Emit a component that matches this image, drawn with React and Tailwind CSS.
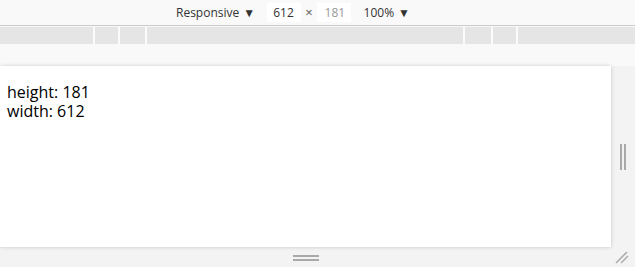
export default function App() {
  const font = { fontFamily: '"Open Sans", "Noto Sans", sans-serif' };
  return (
    <div className="w-[635px] h-[267px] flex flex-col bg-[#f3f3f3] overflow-hidden" style={font}>
      <div className="h-[26px] shrink-0 bg-[#f9f9f9] border-b border-[#cbcbcb] flex items-center text-[12px] text-[#333]">
        <div className="ml-[176px] flex items-center">
          <span>Responsive</span>
          <span className="ml-[4px] text-[12px] leading-none">▼</span>
        </div>
        <div className="ml-[12px] w-[34px] h-[19px] bg-white flex items-center pl-[6px] text-[#333]">612</div>
        <span className="ml-[4px] text-[13px] text-[#555]">×</span>
        <div className="ml-[4px] w-[34px] h-[19px] bg-white flex items-center pl-[8px] text-[#999]">181</div>
        <div className="ml-[13px] flex items-center">
          <span>100%</span>
          <span className="ml-[4px] text-[12px] leading-none">▼</span>
        </div>
      </div>
      <div className="h-[1px] bg-[#f9f9f9] shrink-0" />
      <div className="h-[17px] shrink-0 bg-[#e5e5e5] flex">
        <div className="w-[93px]" />
        <div className="w-[2px] bg-[#fbfbfb]" />
        <div className="w-[23px]" />
        <div className="w-[2px] bg-[#fbfbfb]" />
        <div className="w-[25px]" />
        <div className="w-[2px] bg-[#fbfbfb]" />
        <div className="w-[316px]" />
        <div className="w-[2px] bg-[#fbfbfb]" />
        <div className="w-[26px]" />
        <div className="w-[2px] bg-[#fbfbfb]" />
        <div className="w-[23px]" />
        <div className="w-[2px] bg-[#fbfbfb]" />
      </div>
      <div className="h-[22px] shrink-0 bg-[#f9f9f9]" />
      <div className="flex shrink-0">
        <div className="w-[611px] h-[181px] bg-white shadow-[0_0_4px_rgba(0,0,0,0.18)] relative z-10 px-[7px] pt-[17px] text-[16px] leading-[19px] text-black">
          <div>height: 181</div>
          <div>width: 612</div>
        </div>
        <div className="flex-1 flex items-center justify-center">
          <div className="flex gap-[2px] h-[26px]">
            <div className="w-[2px] bg-[#a9a9a9]" />
            <div className="w-[2px] bg-[#a9a9a9]" />
          </div>
        </div>
      </div>
      <div className="flex-1 relative flex justify-center">
        <div className="flex flex-col gap-[2px] w-[26px] mt-[8px] ml-[-23px]">
          <div className="h-[2px] bg-[#a9a9a9]" />
          <div className="h-[2px] bg-[#a9a9a9]" />
        </div>
        <svg className="absolute right-[6px] bottom-[3px]" width="14" height="14" viewBox="0 0 14 14">
          <line x1="1" y1="13" x2="12" y2="2" stroke="#aaa" strokeWidth="1.5" />
          <line x1="6" y1="13" x2="13" y2="6" stroke="#aaa" strokeWidth="1.5" />
        </svg>
      </div>
    </div>
  );
}
